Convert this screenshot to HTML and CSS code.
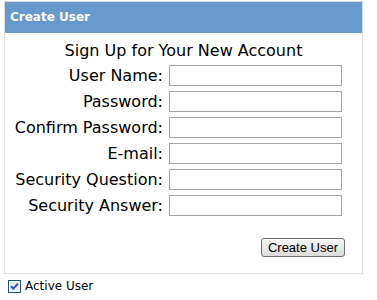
FILE: index.html
```html
<!DOCTYPE html>
<html lang="en">
  <head>
    <meta charset="UTF-8" />
    <title>Create User</title>
    <link rel="stylesheet" href="styles.css">
  </head>
  <body>
    <div class="panel">
      <div class="panel-header">Create User</div>
      <div class="panel-body">
        <div class="title">Sign Up for Your New Account</div>
        <div class="form-grid">
          <label class="field-label">User Name:</label>
          <input class="field-input" type="text" />
          <label class="field-label">Password:</label>
          <input class="field-input" type="password" />
          <label class="field-label">Confirm Password:</label>
          <input class="field-input" type="password" />
          <label class="field-label">E-mail:</label>
          <input class="field-input" type="text" />
          <label class="field-label">Security Question:</label>
          <input class="field-input" type="text" />
          <label class="field-label">Security Answer:</label>
          <input class="field-input" type="text" />
        </div>
        <div class="actions">
          <button class="btn" type="button">Create User</button>
        </div>
      </div>
    </div>

    <label class="active-user">
      <svg class="check-box" width="13" height="13" viewBox="0 0 13 13">
        <rect x="0.5" y="0.5" width="12" height="12" fill="#fff" stroke="#1c5180" />
        <rect x="1.5" y="1.5" width="10" height="10" fill="#e8ecef" />
        <path d="M3 6.2 L5.3 8.6 L10 3.6" fill="none" stroke="#2a4fc0" stroke-width="2" />
      </svg>
      <span>Active User</span>
    </label>
  </body>
</html>
```

FILE: styles.css
```css
body {
  margin: 0;
  padding: 1px 0 0 4px;
  font-family: 'DejaVu Sans', Verdana, sans-serif;
  color: #000;
  background: #fff;
}

.panel {
  width: 357px;
  border: 1px solid #dcdcdc;
}

.panel-header {
  height: 31px;
  line-height: 31px;
  padding-left: 5px;
  background-color: #6699cc;
  color: #fff;
  font-size: 12px;
  font-weight: bold;
}

.panel-body {
  padding: 7px 0 16px 0;
}

.title {
  text-align: center;
  font-size: 16px;
  line-height: 22px;
  margin-bottom: 3px;
}

.form-grid {
  display: grid;
  grid-template-columns: 158px 173px;
  column-gap: 6px;
  row-gap: 5px;
}

.field-label {
  font-size: 16px;
  line-height: 21px;
  text-align: right;
}

.field-input {
  box-sizing: border-box;
  width: 173px;
  height: 21px;
  margin: 0;
  border: 1px solid #a5a5a5;
  background: #fff;
}

.actions {
  display: flex;
  justify-content: flex-end;
  padding: 22px 17px 0 0;
}

.btn {
  height: 19px;
  padding: 0 6px;
  font-family: 'Liberation Sans', Arial, sans-serif;
  font-size: 13px;
  color: #000;
  background: linear-gradient(#f6f6f6, #dcdcdc);
  border: 1px solid #707070;
  border-radius: 3px;
}

.active-user {
  display: flex;
  align-items: center;
  gap: 4px;
  margin: 5px 0 0 4px;
  font-size: 12px;
}
```
